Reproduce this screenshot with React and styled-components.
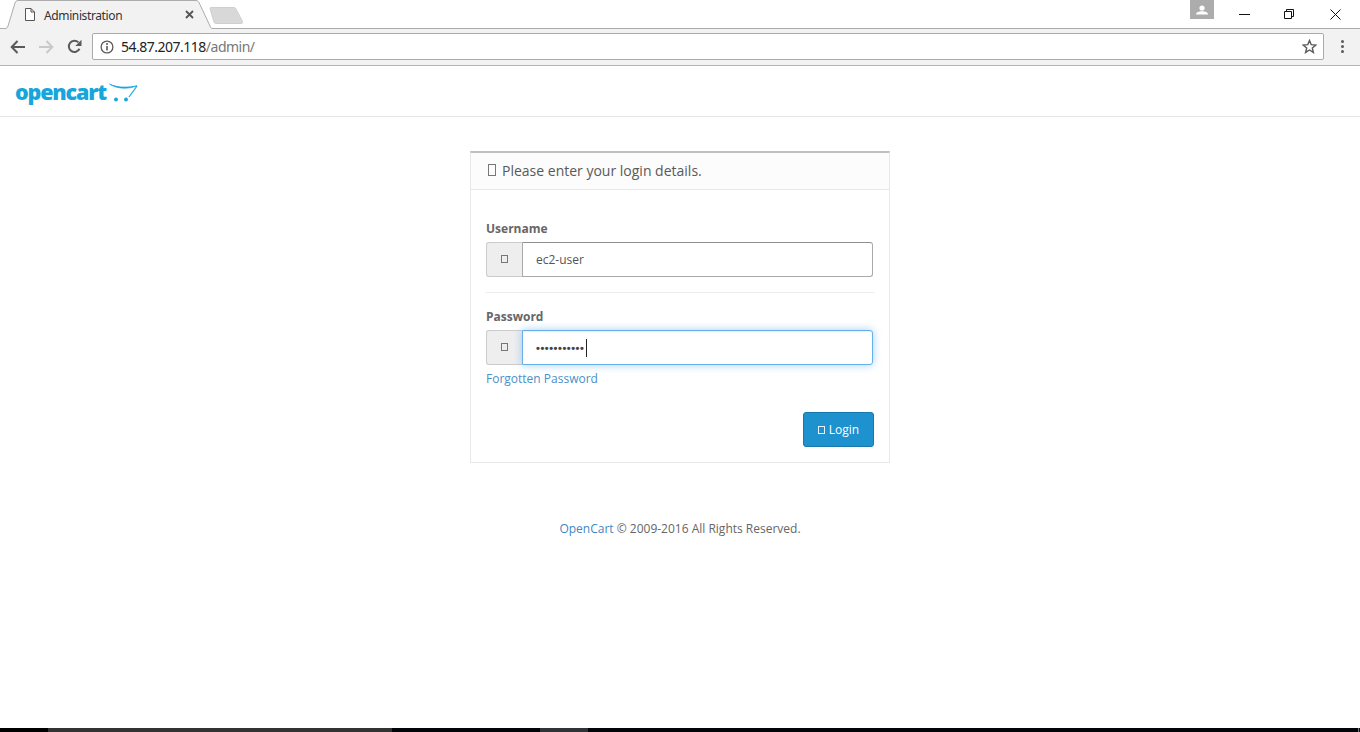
import React from "react";
import styled, { createGlobalStyle } from "styled-components";

const Global = createGlobalStyle`
  html, body { margin: 0; padding: 0; background: #fff; height: 100%; overflow: hidden; }
  #root { height: 100%; }
  * { box-sizing: border-box; }
`;

const Page = styled.div`
  height: 732px; display: flex; flex-direction: column;
  font-family: "Open Sans", "Noto Sans", sans-serif; font-size: 12px; color: #666;
`;

/* browser chrome */
const TitleBar = styled.div`
  height: 29px; flex: none; display: flex; align-items: flex-start; background: #fff;
  border-bottom: 1px solid #acacac; padding-left: 5px;
`;
const Tab = styled.div`
  position: relative; width: 207px; height: 29px; display: flex; align-items: center;
  padding: 0 18px 0 20px; flex: none; font-size: 12px; color: #333;
  & > span { position: relative; flex: 1; margin-left: 9px; padding-top: 1px; font-family: "Noto Sans", sans-serif; letter-spacing: -0.38px; }
  & > svg { position: relative; }
`;
const TabShape = styled.svg`position: absolute !important; left: 0; top: 0;`;
const NewTab = styled.svg`flex: none; margin: 7px 0 0 -3px;`;
const Spacer = styled.div`flex: 1;`;
const WinArea = styled.div`display: flex; align-items: flex-start; height: 28px; padding-right: 2px;`;
const Avatar = styled.div`
  width: 24px; height: 19px; background: #acacac; margin-right: 8px;
  display: flex; align-items: center; justify-content: center;
`;
const WinBtn = styled.div`
  width: ${p => p.$w}px; height: 28px; display: flex; align-items: center; justify-content: center;
`;
const Toolbar = styled.div`
  height: 37px; flex: none; background: #f2f2f2; border-bottom: 1px solid #b4b4b4;
  display: flex; align-items: center; padding: 0 0 1px 4px;
`;
const NavIcon = styled.div`
  width: 28px; height: 28px; display: flex; align-items: center; justify-content: center; flex: none;
`;
const Omnibox = styled.div`
  margin-left: 4px; width: 1232px; height: 27px; background: #fff; border: 1px solid #aaa; border-radius: 2px;
  display: flex; align-items: center; padding: 0 6px 0 7px; flex: none;
`;
const Url = styled.div`
  flex: 1; margin-left: 7px; font-family: "Noto Sans", sans-serif; font-size: 14px; color: #222; letter-spacing: -0.5px;
  & > em { font-style: normal; color: #777; }
`;
const Menu = styled.div`
  flex: 1; display: flex; justify-content: center; gap: 2px; flex-direction: column; align-items: center;
  & > i { width: 3px; height: 3px; border-radius: 50%; background: #5a5a5a; }
`;

/* page */
const Header = styled.header`
  height: 51px; flex: none; border-bottom: 1px solid #e6e6e6; display: flex; align-items: center; padding: 0 0 2px 15px;
`;
const Logo = styled.div`display: flex; align-items: flex-start; color: #17a5dc;`;
const LogoText = styled.span`
  font-family: "Open Sans", sans-serif; font-weight: 800; font-size: 21.5px; line-height: 24px; letter-spacing: -1.15px; margin-top: 4px;
`;
const LogoCart = styled.svg`flex: none; margin: 7px 0 0 2px;`;
const Main = styled.main`flex: 1; display: flex; flex-direction: column; align-items: center; padding-top: 34px;`;
const Panel = styled.section`
  width: 420px; height: 312px; border: 1px solid #e8e8e8; border-top: 2px solid #bfbfbf; background: #fff;
`;
const PanelHead = styled.div`
  height: 37px; background: #fcfcfc; border-bottom: 1px solid #e8e8e8; padding: 0 15px 2px 17px; font-size: 14px;
  display: flex; align-items: center; gap: 6px; color: #595959;
`;
const Tofu = styled.i`
  display: inline-block; flex: none; width: ${p => p.$w || 7}px; height: ${p => p.$h || 10}px;
  border: 1px solid ${p => p.$c || "#777"};
`;
const PanelBody = styled.form`padding: 30px 15px 0; display: flex; flex-direction: column;`;
const Label = styled.label`font-weight: 700; color: #666; line-height: 18px; display: block; margin-bottom: 4px;`;
const InputGroup = styled.div`display: flex; height: 35px; width: 387px;`;
const Addon = styled.div`
  width: 36px; flex: none; background: #eee; border: 1px solid #ccc; border-right: 0; border-radius: 3px 0 0 3px;
  display: flex; align-items: center; justify-content: center; padding-bottom: 2px;
`;
const Field = styled.div`
  flex: 1; position: relative; background: #fff; border: 1px solid ${p => p.$focus ? "#66afe9" : "#aaa"};
  border-top-color: ${p => p.$focus ? "#66afe9" : "#8f8f8f"};
  border-radius: 0 3px 3px 0; display: flex; align-items: center; padding: 0 13px; color: #555; font-size: 12px;
  box-shadow: ${p => p.$focus ? "inset 0 1px 1px rgba(0,0,0,.075), 0 0 8px rgba(102,175,233,.6)" : "none"};
`;
const Caret = styled.i`width: 1px; height: 18px; background: #222; margin-left: 2px;`;
const Dots = styled.span`font-size: 11px; letter-spacing: 0.55px; color: #444; font-family: "Liberation Sans", sans-serif; font-weight: 700;`;
const Rule = styled.hr`width: 388px; margin: 15px 0 15px; border: 0; border-top: 1px solid #ececec;`;
const Forgot = styled.a`color: #4a90c8; line-height: 18px; margin-top: 5px; display: block;`;
const Actions = styled.div`display: flex; justify-content: flex-end; margin-top: 24px; width: 388px;`;
const LoginBtn = styled.div`
  width: 71px; height: 35px; background: #1e91cf; border: 1px solid #1978ab; border-radius: 3px; color: #fff;
  display: flex; align-items: center; justify-content: center; gap: 4px; font-size: 12px;
`;
const Footer = styled.footer`
  margin-top: 57px; line-height: 18px; color: #666; text-align: center;
  & > a { color: #3f87c5; }
`;
const TaskEdge = styled.div`
  height: 4px; flex: none; background: #01050a; display: flex;
`;
const Seg = styled.div`width: ${p => p.$w}px; flex: none; background: ${p => p.$c};`;

const tabEdge = "M0 28.5H.5C1.5 28.5 2.3 27.5 3 26L10 3C10.5 1.5 11.5 .5 13 .5H191C192.5 .5 193.5 1.5 194 2.5L205 26C205.7 27.5 206.3 28.5 207 28.5";

export default function App() {
  return (
    <Page>
      <Global />
      <TitleBar>
        <Tab>
          <TabShape width="207" height="29" viewBox="0 0 207 29">
            <path d={tabEdge + "V29H0Z"} fill="#f2f2f2" />
            <path d={tabEdge} fill="none" stroke="#acacac" />
          </TabShape>
          <svg width="10" height="13" viewBox="0 0 10 13"><path d="M.5.5H6L9.5 4V12.5H.5ZM6 .5V4H9.5" fill="#fff" stroke="#555" /></svg>
          <span>Administration</span>
          <svg width="9" height="9" viewBox="0 0 9 9"><path d="M1 1L8 8M8 1L1 8" stroke="#555" strokeWidth="1.8" /></svg>
        </Tab>
        <NewTab width="36" height="17" viewBox="0 0 36 17"><path d="M1 1.5C1 .8 1.5 .5 2 .5H25C26 .5 26.6 1 27 2L33.5 14.5C34 15.5 33.5 16.5 32 16.5H7C6 16.5 5.5 16 5 15Z" fill="#d8d8d8" stroke="#cfcfcf" /></NewTab>
        <Spacer />
        <WinArea>
          <Avatar><svg width="12" height="10" viewBox="0 0 12 10"><circle cx="6" cy="3" r="2.6" fill="#fff" /><path d="M0 9.5C0 7 3 6.2 6 6.2S12 7 12 9.5Z" fill="#fff" /></svg></Avatar>
          <WinBtn $w={44}><svg width="11" height="3" viewBox="0 0 11 3"><path d="M0 1.5H11" stroke="#111" /></svg></WinBtn>
          <WinBtn $w={46}><svg width="10" height="10" viewBox="0 0 10 10"><path d="M.5 2.5H7.5V9.5H.5ZM2.5 2.5V.5H9.5V7.5H7.5" fill="none" stroke="#111" /></svg></WinBtn>
          <WinBtn $w={46}><svg width="11" height="11" viewBox="0 0 11 11"><path d="M.5.5L10.5 10.5M10.5.5L.5 10.5" stroke="#111" /></svg></WinBtn>
        </WinArea>
      </TitleBar>
      <Toolbar>
        <NavIcon><svg width="16" height="14" viewBox="0 0 16 14"><path d="M15 7H2M7.5 1L1.7 7L7.5 13" fill="none" stroke="#5a5a5a" strokeWidth="2" /></svg></NavIcon>
        <NavIcon><svg width="16" height="14" viewBox="0 0 16 14"><path d="M1 7H14M8.5 1L14.3 7L8.5 13" fill="none" stroke="#c9c9c9" strokeWidth="2" /></svg></NavIcon>
        <NavIcon><svg width="15" height="15" viewBox="0 0 15 15"><path d="M12.5 9.8A5.6 5.6 0 1 1 11.4 3.4" fill="none" stroke="#5a5a5a" strokeWidth="2" /><path d="M14.5 .8V7H8.3Z" fill="#5a5a5a" /></svg></NavIcon>
        <Omnibox>
          <svg width="14" height="14" viewBox="0 0 14 14"><circle cx="7" cy="7" r="5.9" fill="none" stroke="#5a5a5a" strokeWidth="1.3" /><path d="M7 6V10.5" stroke="#5a5a5a" strokeWidth="1.6" /><circle cx="7" cy="4" r="1" fill="#5a5a5a" /></svg>
          <Url>54.87.207.118<em>/admin/</em></Url>
          <svg width="15" height="15" viewBox="0 0 15 15"><path d="M7.5 1.5L9.2 5.6L13.8 6L10.3 8.9L11.4 13.4L7.5 11L3.6 13.4L4.7 8.9L1.2 6L5.8 5.6Z" fill="none" stroke="#5a5a5a" strokeWidth="1.4" /></svg>
        </Omnibox>
        <Menu><i /><i /><i /></Menu>
      </Toolbar>

      <Header>
        <Logo>
          <LogoText>opencart</LogoText>
          <LogoCart width="30" height="20" viewBox="0 0 30 20">
            <path d="M1.5 1C9 4.5 18 5 29 2.8C21 6.2 9 6.2 1.5 1Z" fill="#17a5dc" stroke="#17a5dc" strokeWidth=".7" />
            <path d="M29 3L21 14" stroke="#17a5dc" strokeWidth="1.2" fill="none" />
            <circle cx="8" cy="16.5" r="1.9" fill="#17a5dc" />
            <circle cx="18" cy="16.5" r="1.9" fill="#17a5dc" />
          </LogoCart>
        </Logo>
      </Header>

      <Main>
        <Panel>
          <PanelHead><Tofu $w={8} $h={12} />Please enter your login details.</PanelHead>
          <PanelBody>
            <Label>Username</Label>
            <InputGroup>
              <Addon><Tofu $w={7} $h={8} /></Addon>
              <Field>ec2-user</Field>
            </InputGroup>
            <Rule />
            <Label>Password</Label>
            <InputGroup>
              <Addon><Tofu $w={7} $h={8} /></Addon>
              <Field $focus><Dots>•••••••••••</Dots><Caret /></Field>
            </InputGroup>
            <Forgot>Forgotten Password</Forgot>
            <Actions>
              <LoginBtn><Tofu $w={7} $h={8} $c="#e3f2fb" />Login</LoginBtn>
            </Actions>
          </PanelBody>
        </Panel>
        <Footer><a>OpenCart</a> © 2009-2016 All Rights Reserved.</Footer>
      </Main>

      <TaskEdge>
        <Seg $w={48} $c="#000" />
        <Seg $w={344} $c="#333" />
        <Seg $w={148} $c="#01050a" />
        <Seg $w={48} $c="#2f3338" />
        <Spacer />
        <Seg $w={1} $c="#777" />
        <Seg $w={1} $c="#111" />
      </TaskEdge>
    </Page>
  );
}
